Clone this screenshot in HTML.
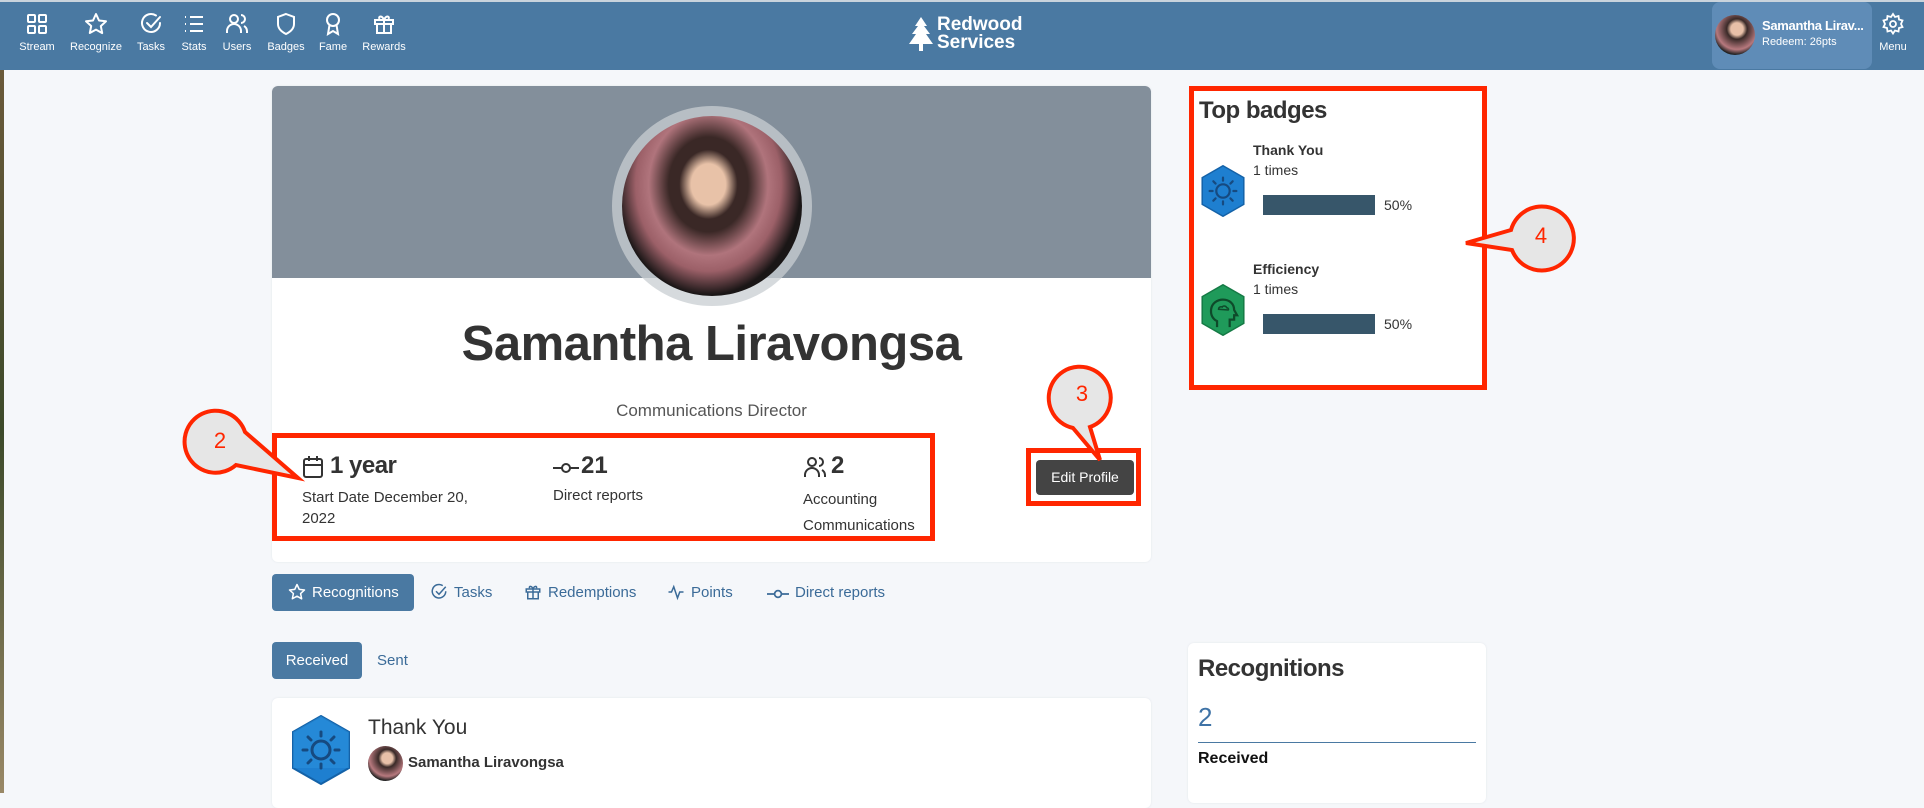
<!DOCTYPE html>
<html><head><meta charset="utf-8"><style>
*{margin:0;padding:0;box-sizing:border-box}
body{width:1924px;height:793px;overflow:hidden;background:#f5f7fa;font-family:"Liberation Sans",sans-serif;position:relative;color:#333}
.abs{position:absolute}
.nav{left:0;top:0;width:1924px;height:70px;background:#4a79a2;border-top:2px solid #c9d3dc}
.ni{position:absolute;top:12px;width:60px;margin-left:-30px;text-align:center;color:#fff;font-size:11px}
.ni svg{display:block;margin:0 auto 5px;width:24px;height:24px}
.card{background:#fff;border-radius:6px;position:absolute}
.red{position:absolute;border:5px solid #ff2600}
.tab{position:absolute;top:574px;height:37px;line-height:37px;font-size:15px;color:#3b6b98}
.tab svg{vertical-align:-4px;margin-right:6px}
</style></head><body>
<div class="abs" style="left:0;top:70px;width:4px;height:723px;background:linear-gradient(#6b5a3a,#3c4a2a,#998866)"></div>
<div class="abs nav"></div>
<div class="ni" style="left:37px"><svg viewBox="0 0 24 24" fill="none" stroke="#fff" stroke-width="2"><rect x="3" y="3" width="7" height="7" rx="1"/><rect x="14" y="3" width="7" height="7" rx="1"/><rect x="3" y="14" width="7" height="7" rx="1"/><rect x="14" y="14" width="7" height="7" rx="1"/></svg>Stream</div>
<div class="ni" style="left:96px"><svg viewBox="0 0 24 24" fill="none" stroke="#fff" stroke-width="2" stroke-linejoin="round"><path d="M12 2l3 6.5 7 .8-5.2 4.8 1.4 7L12 17.6 5.8 21l1.4-7L2 9.3l7-.8z"/></svg>Recognize</div>
<div class="ni" style="left:151px"><svg viewBox="0 0 24 24" fill="none" stroke="#fff" stroke-width="2" stroke-linecap="round"><path d="M21 11a9 9 0 1 1-4-7.5"/><path d="M8 11l4 4 9-10"/></svg>Tasks</div>
<div class="ni" style="left:194px"><svg viewBox="0 0 24 24" fill="none" stroke="#fff" stroke-width="2"><path d="M8 5h13M8 12h13M8 19h13M3 5h1M3 12h1M3 19h1"/></svg>Stats</div>
<div class="ni" style="left:237px"><svg viewBox="0 0 24 24" fill="none" stroke="#fff" stroke-width="2"><circle cx="9" cy="7" r="4"/><path d="M2 21v-2a7 7 0 0 1 14 0v2M16 3a4 4 0 0 1 0 8M22 21v-2a6 6 0 0 0-3-5"/></svg>Users</div>
<div class="ni" style="left:286px"><svg viewBox="0 0 24 24" fill="none" stroke="#fff" stroke-width="2"><path d="M12 2l8 3v7c0 5-4 8-8 10-4-2-8-5-8-10V5z"/></svg>Badges</div>
<div class="ni" style="left:333px"><svg viewBox="0 0 24 24" fill="none" stroke="#fff" stroke-width="2"><circle cx="12" cy="8" r="6"/><path d="M8.5 13L7 22l5-3 5 3-1.5-9"/></svg>Fame</div>
<div class="ni" style="left:384px"><svg viewBox="0 0 24 24" fill="none" stroke="#fff" stroke-width="2"><rect x="3" y="8" width="18" height="4"/><path d="M5 12v9h14v-9M12 8v13M12 8C10 3 6 4 7.5 7M12 8c2-5 6-4 4.5-1"/></svg>Rewards</div>
<svg class="abs" style="left:908px;top:17px" width="26" height="36" viewBox="0 0 26 36"><path d="M13 0L7 9h3L4 17h4L1 27h10v7h4v-7h10l-7-10h4l-6-8h3z" fill="#fff"/></svg>
<div class="abs" style="left:937px;top:16px;color:#fff;font-weight:bold;font-size:19px;line-height:18px">Redwood<br>Services</div>
<div class="abs" style="left:1712px;top:2px;width:160px;height:67px;background:#5f8cb7;border-radius:8px"></div>
<div class="abs" style="left:1715px;top:15px;width:40px;height:40px;border-radius:50%;background:radial-gradient(circle at 55% 35%,#e8c0a8 0 18%,#3a2a28 30%,#b7797e 60%,#222 75%)"></div>
<div class="abs" style="left:1762px;top:18px;color:#fff;font-size:13px;font-weight:bold;letter-spacing:-.3px">Samantha Lirav...</div>
<div class="abs" style="left:1762px;top:36px;color:#fff;font-size:11px">Redeem: 26pts</div>
<div class="ni" style="left:1893px"><svg viewBox="0 0 24 24" fill="none" stroke="#fff" stroke-width="1.8"><circle cx="12" cy="12" r="3"/><path d="M12 2l2 3 3.5-1 .5 3.5 3.5 1-1.5 3.5 1.5 3-3.5 1-.5 3.5-3.5-1-2 3-2-3-3.5 1-.5-3.5-3.5-1L4 12 2.5 8.5 6 7.5 6.5 4l3.5 1z"/></svg>Menu</div>

<div class="card" style="left:272px;top:86px;width:879px;height:476px;overflow:hidden;box-shadow:0 0 2px #e2e6ea">
<div style="height:192px;background:#838f9b"></div></div>
<div class="abs" style="left:612px;top:106px;width:200px;height:200px;border-radius:50%;background:rgba(200,205,210,.75)"></div>
<div class="abs" style="left:622px;top:116px;width:180px;height:180px;border-radius:50%;background:radial-gradient(ellipse at 48% 38%,#e8c2a8 0 13%,#3a2826 22% 30%,#b0747c 45%,#9c6068 55%,#1a1616 70%)"></div>
<div class="abs" style="left:272px;top:316px;width:879px;text-align:center;font-size:49px;font-weight:bold;color:#333;letter-spacing:-.5px">Samantha Liravongsa</div>
<div class="abs" style="left:272px;top:401px;width:879px;text-align:center;font-size:17px;color:#555">Communications Director</div>

<svg class="abs" style="left:302px;top:455px" width="22" height="24" viewBox="0 0 22 24" fill="none" stroke="#333" stroke-width="2"><rect x="2" y="4" width="18" height="18" rx="2"/><path d="M2 10h18M7 1v5M15 1v5"/></svg>
<div class="abs" style="left:330px;top:452px;font-size:24px;font-weight:bold;letter-spacing:-.5px">1 year</div>
<div class="abs" style="left:302px;top:487px;font-size:15px;line-height:21px">Start Date December 20,<br>2022</div>
<svg class="abs" style="left:553px;top:461px" width="26" height="14" viewBox="0 0 26 14" fill="none" stroke="#333" stroke-width="2"><circle cx="13" cy="7" r="4"/><path d="M0 7h9M17 7h9"/></svg>
<div class="abs" style="left:581px;top:452px;font-size:24px;font-weight:bold">21</div>
<div class="abs" style="left:553px;top:487px;font-size:15px">Direct reports</div>
<svg class="abs" style="left:803px;top:455px" width="24" height="24" viewBox="0 0 24 24" fill="none" stroke="#333" stroke-width="2"><circle cx="9" cy="7" r="4"/><path d="M2 22v-2a7 7 0 0 1 14 0v2M16 3a4 4 0 0 1 0 8M22 22v-2a6 6 0 0 0-3-5"/></svg>
<div class="abs" style="left:831px;top:452px;font-size:24px;font-weight:bold">2</div>
<div class="abs" style="left:803px;top:487px;font-size:15px;line-height:26px">Accounting<br>Communications</div>
<div class="red" style="left:272px;top:433px;width:663px;height:108px"></div>

<div class="abs" style="left:1036px;top:460px;width:98px;height:35px;border-radius:4px;background:#444;color:#fff;font-size:14px;text-align:center;line-height:35px">Edit Profile</div>
<div class="red" style="left:1026px;top:448px;width:115px;height:58px"></div>

<div class="tab" style="left:272px;width:142px;background:#4a79a2;color:#fff;border-radius:4px;padding-left:16px"><svg width="18" height="18" viewBox="0 0 24 24" fill="none" stroke="#fff" stroke-width="2" stroke-linejoin="round"><path d="M12 2l3 6.5 7 .8-5.2 4.8 1.4 7L12 17.6 5.8 21l1.4-7L2 9.3l7-.8z"/></svg>Recognitions</div>
<div class="tab" style="left:430px"><svg width="18" height="18" viewBox="0 0 24 24" fill="none" stroke="#3b6b98" stroke-width="2"><path d="M21 11a9 9 0 1 1-4-7.5"/><path d="M8 11l4 4 9-10"/></svg>Tasks</div>
<div class="tab" style="left:524px"><svg width="18" height="18" viewBox="0 0 24 24" fill="none" stroke="#3b6b98" stroke-width="2"><rect x="3" y="8" width="18" height="4"/><path d="M5 12v9h14v-9M12 8v13M12 8C10 3 6 4 7.5 7M12 8c2-5 6-4 4.5-1"/></svg>Redemptions</div>
<div class="tab" style="left:667px"><svg width="18" height="18" viewBox="0 0 24 24" fill="none" stroke="#3b6b98" stroke-width="2"><path d="M2 12h4l3-7 5 15 3-8h5"/></svg>Points</div>
<div class="tab" style="left:767px"><svg width="22" height="14" viewBox="0 0 26 14" fill="none" stroke="#3b6b98" stroke-width="2"><circle cx="13" cy="7" r="4"/><path d="M0 7h9M17 7h9"/></svg>Direct reports</div>

<div class="abs" style="left:272px;top:642px;width:90px;height:37px;background:#4a79a2;color:#fff;border-radius:4px;font-size:15px;text-align:center;line-height:37px">Received</div>
<div class="abs" style="left:377px;top:642px;line-height:37px;font-size:15px;color:#3b6b98">Sent</div>

<div class="card" style="left:272px;top:698px;width:879px;height:110px;box-shadow:0 0 2px #e2e6ea"></div>
<svg class="abs" style="left:291px;top:715px" width="60" height="70" viewBox="0 0 60 70"><path d="M30 1L58 17v36L30 69 2 53V17z" fill="#1e7fd0" stroke="#1462a8" stroke-width="2"/><path d="M30 1L58 17v36L2 53V17z" fill="#2a90dc" opacity=".6"/><g stroke="#164a80" stroke-width="3" fill="none" stroke-linecap="round"><circle cx="30" cy="35" r="9"/><path d="M30 17v4M30 49v4M12 35h4M44 35h4M17 22l3 3M40 45l3 3M43 22l-3 3M20 45l-3 3"/></g></svg>
<div class="abs" style="left:368px;top:716px;font-size:21px;color:#333">Thank You</div>
<div class="abs" style="left:368px;top:746px;width:35px;height:35px;border-radius:50%;background:radial-gradient(circle at 55% 35%,#e8c0a8 0 18%,#3a2a28 30%,#b7797e 60%,#222 75%)"></div>
<div class="abs" style="left:408px;top:754px;font-size:15px;font-weight:bold">Samantha Liravongsa</div>

<div class="card" style="left:1189px;top:86px;width:298px;height:304px"></div>
<div class="abs" style="left:1199px;top:97px;font-size:24px;font-weight:bold;letter-spacing:-.5px">Top badges</div>
<svg class="abs" style="left:1200px;top:165px" width="46" height="52" viewBox="0 0 60 70"><path d="M30 1L58 17v36L30 69 2 53V17z" fill="#1e7fd0" stroke="#1462a8" stroke-width="2"/><g stroke="#164a80" stroke-width="3" fill="none" stroke-linecap="round"><circle cx="30" cy="35" r="9"/><path d="M30 17v4M30 49v4M12 35h4M44 35h4M17 22l3 3M40 45l3 3M43 22l-3 3M20 45l-3 3"/></g></svg>
<div class="abs" style="left:1253px;top:142px;font-size:14px;font-weight:bold">Thank You</div>
<div class="abs" style="left:1253px;top:162px;font-size:14px">1 times</div>
<div class="abs" style="left:1263px;top:195px;width:112px;height:20px;background:#37566a"></div>
<div class="abs" style="left:1384px;top:197px;font-size:14px">50%</div>
<svg class="abs" style="left:1200px;top:284px" width="46" height="52" viewBox="0 0 60 70"><path d="M30 1L58 17v36L30 69 2 53V17z" fill="#1f9a5a" stroke="#157a45" stroke-width="2"/><path d="M22 58v-8c-6-3-9-9-8-16 1-8 8-13 16-13 9 0 15 6 15 14l4 7h-4v6h-6v10" fill="none" stroke="#0e4a2a" stroke-width="3"/><path d="M24 34c0-3 3-4 5-3 1-2 5-2 6 1 2 0 3 2 2 3z" fill="none" stroke="#0e4a2a" stroke-width="2"/></svg>
<div class="abs" style="left:1253px;top:261px;font-size:14px;font-weight:bold">Efficiency</div>
<div class="abs" style="left:1253px;top:281px;font-size:14px">1 times</div>
<div class="abs" style="left:1263px;top:314px;width:112px;height:20px;background:#37566a"></div>
<div class="abs" style="left:1384px;top:316px;font-size:14px">50%</div>
<div class="red" style="left:1189px;top:86px;width:298px;height:304px"></div>

<div class="card" style="left:1188px;top:643px;width:298px;height:160px;box-shadow:0 0 2px #e2e6ea"></div>
<div class="abs" style="left:1198px;top:655px;font-size:24px;font-weight:bold;letter-spacing:-.5px">Recognitions</div>
<div class="abs" style="left:1198px;top:702px;font-size:26px;color:#3f73a6">2</div>
<div class="abs" style="left:1198px;top:742px;width:278px;height:1px;background:#4a79a2"></div>
<div class="abs" style="left:1198px;top:750px;font-size:16px;font-weight:bold;color:#111">Received</div>

<svg class="abs" style="left:0;top:0" width="1924" height="793" viewBox="0 0 1924 793" fill="#e6e6e6" stroke="#ff2600" stroke-width="4">
<path d="M245 432 L298 478 L236 465 A31 31 0 1 1 245 432 Z"/>
<path d="M1090 427 L1100 460 L1073 428 A31 31 0 1 1 1090 427 Z"/>
<path d="M1511 230 L1466 243 L1512 250 A32 32 0 1 0 1511 230 Z"/>
</svg>
<div class="abs" style="left:205px;top:428px;width:30px;text-align:center;color:#ff2600;font-size:22px">2</div>
<div class="abs" style="left:1067px;top:381px;width:30px;text-align:center;color:#ff2600;font-size:22px">3</div>
<div class="abs" style="left:1526px;top:223px;width:30px;text-align:center;color:#ff2600;font-size:22px">4</div>
</body></html>
